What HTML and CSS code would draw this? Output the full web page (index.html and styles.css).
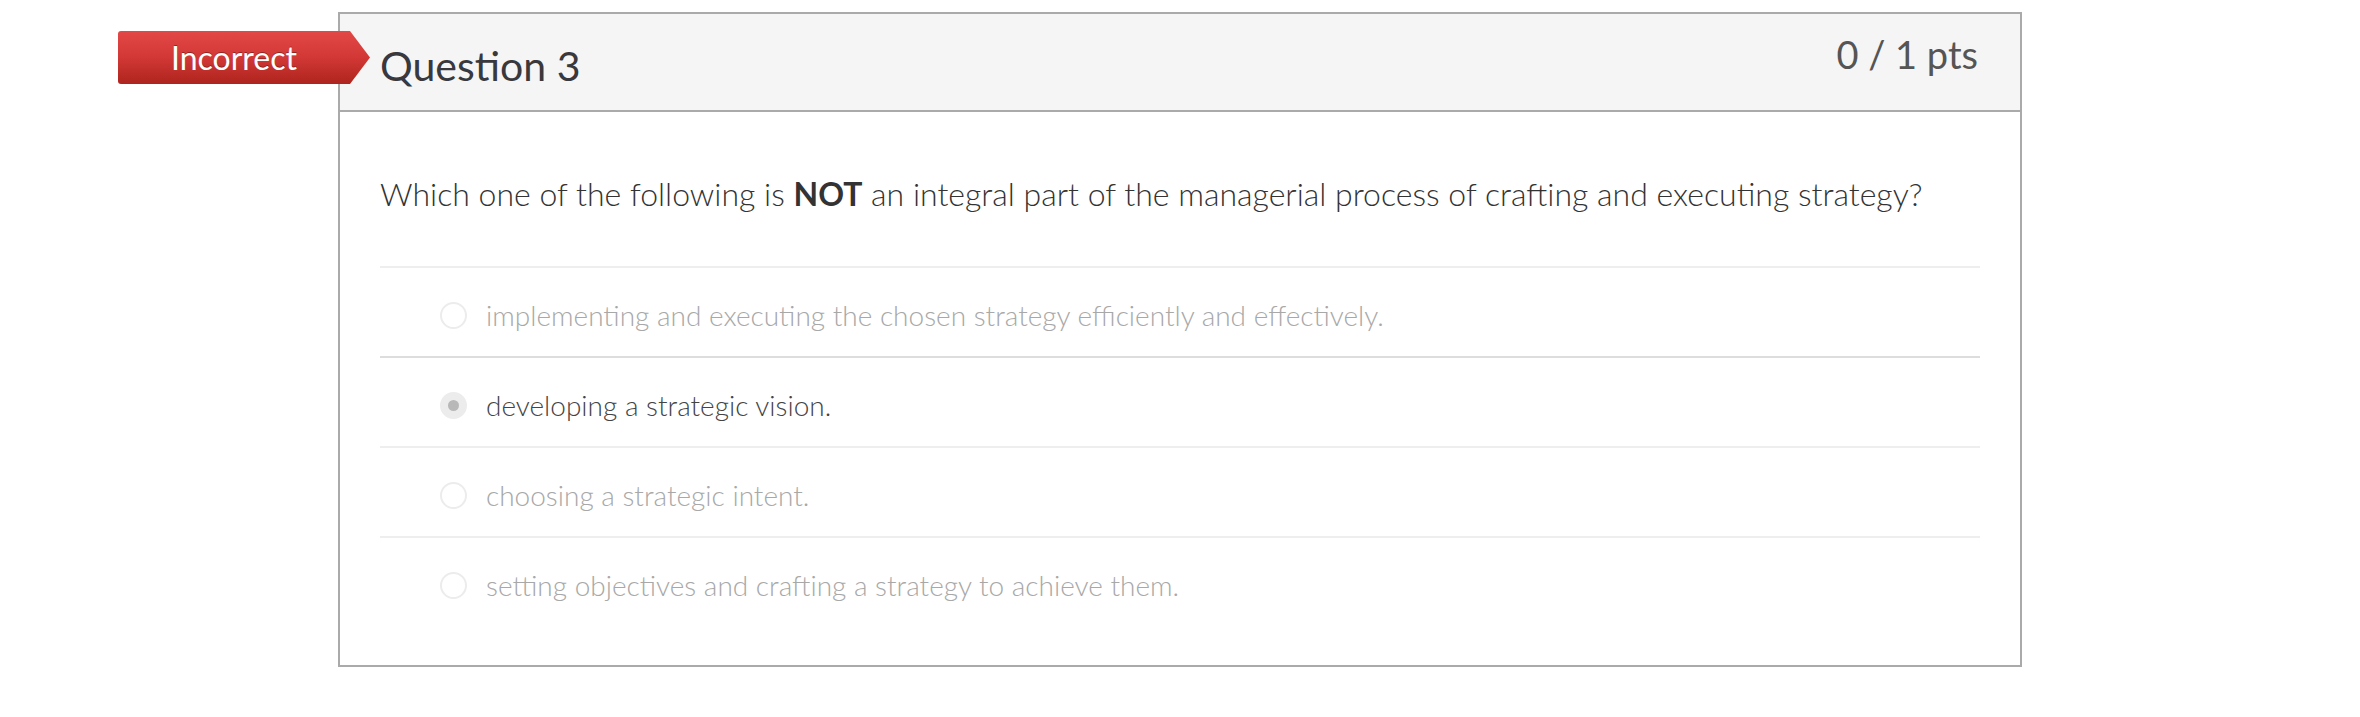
FILE: index.html
```html
<!DOCTYPE html>
<html lang="en">
<head>
<meta charset="utf-8">
<title>Question 3</title>
<link rel="stylesheet" href="styles.css">
</head>
<body>
<div class="page">
  <div class="question-card">
    <div class="result-badge">Incorrect</div>
    <div class="question-header">
      <div class="question-name">Question 3</div>
      <div class="question-points">0 / 1 pts</div>
    </div>
    <div class="question-body">
      <div class="question-text">Which one of the following is <strong>NOT</strong> an integral part of the managerial process of crafting and executing strategy?</div>
      <div class="answers">
        <div class="answer">
          <span class="radio"></span>
          <span class="answer-text">implementing and executing the chosen strategy efficiently and effectively.</span>
        </div>
        <div class="answer answer-selected">
          <span class="radio radio-checked"></span>
          <span class="answer-text">developing a strategic vision.</span>
        </div>
        <div class="answer">
          <span class="radio"></span>
          <span class="answer-text">choosing a strategic intent.</span>
        </div>
        <div class="answer">
          <span class="radio"></span>
          <span class="answer-text">setting objectives and crafting a strategy to achieve them.</span>
        </div>
      </div>
    </div>
  </div>
</div>
</body>
</html>
```

FILE: styles.css
```css
html, body {
  margin: 0;
  padding: 0;
  background: #ffffff;
}

body {
  font-family: Lato, "Open Sans", "Liberation Sans", sans-serif;
  color: #333333;
}

.page {
  padding: 12px 0 0 338px;
}

.question-card {
  position: relative;
  box-sizing: border-box;
  width: 1684px;
  border: 2px solid #aaaaaa;
  background: #ffffff;
}

.result-badge {
  position: absolute;
  left: -222px;
  top: 17px;
  width: 232px;
  height: 53px;
  padding-right: 20px;
  box-sizing: content-box;
  border-radius: 3px 0 0 3px;
  background: linear-gradient(to bottom, #e34846 0%, #d23835 50%, #ae241e 100%);
  clip-path: polygon(0 0, 232px 0, 100% 50%, 232px 100%, 0 100%);
  color: #ffffff;
  font-size: 32px;
  font-weight: 400;
  line-height: 53px;
  text-align: center;
  text-shadow: 0 -1px 0 rgba(0, 0, 0, 0.35);
  z-index: 2;
}

.question-header {
  display: flex;
  justify-content: space-between;
  align-items: flex-start;
  height: 96px;
  padding: 0 42px 0 40px;
  background: #f5f5f5;
  border-bottom: 2px solid #aaaaaa;
}

.question-name {
  margin-top: 27px;
  font-size: 41px;
  line-height: 1.2;
  font-weight: 400;
  color: #38383d;
}

.question-points {
  margin-top: 18px;
  font-size: 38px;
  line-height: 1.2;
  font-weight: 400;
  color: #555555;
}

.question-body {
  padding: 63px 40px 39px 40px;
}

.question-text {
  font-family: "Lato Light", Lato, sans-serif;
  font-size: 32px;
  line-height: 1.2;
  font-weight: 300;
  color: #333333;
  padding-bottom: 53px;
}

.question-text strong {
  font-family: Lato, sans-serif;
  font-weight: 700;
}

.answers {
  display: flex;
  flex-direction: column;
}

.answer {
  display: flex;
  align-items: center;
  box-sizing: border-box;
  height: 90px;
  padding: 6px 0 0 60px;
  border-top: 2px solid #eeeeee;
}

.answer-selected {
  border-top-color: #dddddd;
}

.radio {
  flex: 0 0 auto;
  box-sizing: border-box;
  width: 27px;
  height: 27px;
  margin-right: 19px;
  border: 2px solid #ececec;
  border-radius: 50%;
  background: #ffffff;
  display: flex;
  align-items: center;
  justify-content: center;
}

.radio-checked {
  background: #ececec;
}

.radio-checked::after {
  content: "";
  width: 11px;
  height: 11px;
  border-radius: 50%;
  background: #b8b8b8;
}

.answer-text {
  font-family: "Lato Light", Lato, sans-serif;
  font-size: 28px;
  line-height: 1.2;
  font-weight: 300;
  color: #a8a8a8;
}

.answer-selected .answer-text {
  color: #444444;
}
```
